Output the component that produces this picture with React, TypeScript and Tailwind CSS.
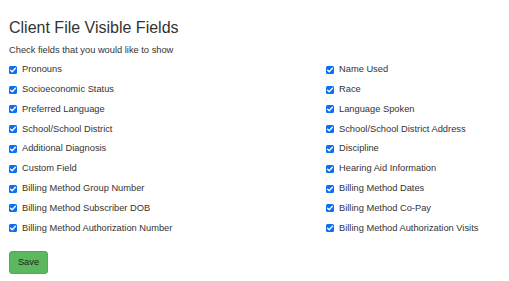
import React from 'react';

const leftFields = [
  'Pronouns',
  'Socioeconomic Status',
  'Preferred Language',
  'School/School District',
  'Additional Diagnosis',
  'Custom Field',
  'Billing Method Group Number',
  'Billing Method Subscriber DOB',
  'Billing Method Authorization Number',
];

const rightFields = [
  'Name Used',
  'Race',
  'Language Spoken',
  'School/School District Address',
  'Discipline',
  'Hearing Aid Information',
  'Billing Method Dates',
  'Billing Method Co-Pay',
  'Billing Method Authorization Visits',
];

const CheckBox = () => (
  <span className="flex h-[8px] w-[8px] shrink-0 items-center justify-center rounded-[1.5px] bg-[#0b6ff0]">
    <svg viewBox="0 0 8 8" className="h-[8px] w-[8px]" fill="none">
      <path d="M1.6 4.2 L3.2 5.8 L6.4 2.2" stroke="white" strokeWidth="1.3" strokeLinecap="round" strokeLinejoin="round" />
    </svg>
  </span>
);

const FieldRow = ({ label }: { label: string }) => (
  <label className="flex h-[19.8px] items-center gap-[5px]">
    <CheckBox />
    <span className="leading-none">{label}</span>
  </label>
);

export default function App() {
  return (
    <div className="h-[281px] w-[509px] bg-white px-[9px] pt-[18px] font-['Liberation_Sans',Arial,sans-serif] text-[#333]">
      <h1 className="text-[16px] leading-[20px] text-[#333]">Client File Visible Fields</h1>
      <p className="mt-[6px] text-[9.3px] leading-[12px]">Check fields that you would like to show</p>
      <div className="mt-[4px] grid grid-cols-[317px_1fr] text-[9.3px]">
        <div className="flex flex-col">
          {leftFields.map((f) => (
            <FieldRow key={f} label={f} />
          ))}
        </div>
        <div className="flex flex-col">
          {rightFields.map((f) => (
            <FieldRow key={f} label={f} />
          ))}
        </div>
      </div>
      <button className="mt-[13px] h-[23px] w-[39px] rounded-[3px] border border-[#4cae4c] bg-[#5cb85c] text-[9.3px] text-[#222]">
        Save
      </button>
    </div>
  );
}
